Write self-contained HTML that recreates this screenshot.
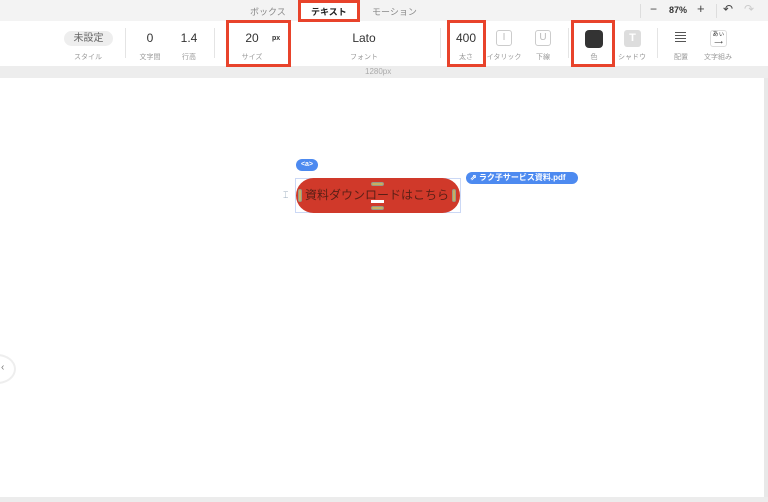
<!DOCTYPE html>
<html><head><meta charset="utf-8"><style>
*{margin:0;padding:0;box-sizing:border-box}
body{width:768px;height:502px;overflow:hidden;background:#fff;font-family:"Liberation Sans","Noto Sans CJK JP",sans-serif;position:relative}
.a{position:absolute}
.lbl{position:absolute;top:52px;font-size:7px;color:#999;transform:translateX(-50%);white-space:nowrap}
.val{position:absolute;top:31px;font-size:12px;color:#333;transform:translateX(-50%);white-space:nowrap}
.rb{position:absolute;border:3px solid #e8432b}
.sep{position:absolute;top:28px;width:1px;height:30px;background:#e4e4e4}
</style></head><body>
<div class="a" style="left:0;top:0;width:768px;height:21px;background:#f3f3f3"></div>
<div class="a" style="left:250px;top:5px;font-size:9px;color:#888">ボックス</div>
<div class="a" style="left:301px;top:3px;width:56px;height:16px;background:#fff"></div>
<div class="a" style="left:311px;top:5px;font-size:9px;color:#222;font-weight:bold">テキスト</div>
<div class="a" style="left:372px;top:5px;font-size:9px;color:#888">モーション</div>
<div class="a" style="left:640px;top:4px;width:1px;height:14px;background:#ddd"></div>
<div class="a" style="left:650px;top:2px;font-size:12px;color:#444">−</div>
<div class="a" style="left:669px;top:5px;font-size:9px;color:#333;font-weight:bold">87%</div>
<div class="a" style="left:697px;top:1px;font-size:13px;color:#444">+</div>
<div class="a" style="left:716px;top:4px;width:1px;height:14px;background:#ddd"></div>
<div class="a" style="left:723px;top:2px;font-size:12px;color:#444">↶</div>
<div class="a" style="left:744px;top:2px;font-size:12px;color:#ccc">↷</div>
<div class="a" style="left:0;top:21px;width:768px;height:45px;background:#fff"></div>
<div class="a" style="left:64px;top:31px;width:49px;height:15px;border-radius:8px;background:#eee;font-size:10px;color:#666;text-align:center;line-height:15px">未設定</div>
<div class="lbl" style="left:88px">スタイル</div>
<div class="sep" style="left:125px"></div>
<div class="val" style="left:150px">0</div><div class="lbl" style="left:150px">文字間</div>
<div class="val" style="left:189px">1.4</div><div class="lbl" style="left:189px">行高</div>
<div class="sep" style="left:214px"></div>
<div class="val" style="left:252px">20</div>
<div class="a" style="left:272px;top:35px;font-size:7px;color:#333;font-weight:bold">px</div>
<div class="lbl" style="left:252px">サイズ</div>
<div class="val" style="left:364px">Lato</div><div class="lbl" style="left:364px">フォント</div>
<div class="sep" style="left:440px"></div>
<div class="val" style="left:466px">400</div><div class="lbl" style="left:466px">太さ</div>
<div class="a" style="left:496px;top:30px;width:16px;height:16px;border:1px solid #ccc;border-radius:3px;font-size:10px;color:#bbb;text-align:center;line-height:14px">I</div>
<div class="lbl" style="left:504px">イタリック</div>
<div class="a" style="left:535px;top:30px;width:16px;height:16px;border:1px solid #ccc;border-radius:3px;font-size:10px;color:#bbb;text-align:center;line-height:14px">U</div>
<div class="lbl" style="left:543px">下線</div>
<div class="sep" style="left:568px"></div>
<div class="a" style="left:585px;top:30px;width:18px;height:18px;border-radius:4px;background:#333"></div>
<div class="lbl" style="left:594px">色</div>
<div class="a" style="left:624px;top:30px;width:17px;height:17px;border-radius:3px;background:#ddd;color:#fff;font-size:11px;font-weight:bold;text-align:center;line-height:17px">T</div>
<div class="lbl" style="left:632px">シャドウ</div>
<div class="sep" style="left:657px"></div>
<div class="a" style="left:675px;top:32px;width:11px;height:12px;background:repeating-linear-gradient(#555 0 1px,transparent 1px 3px)"></div>
<div class="lbl" style="left:681px">配置</div>
<div class="a" style="left:710px;top:30px;width:17px;height:17px;border:1px solid #ddd;border-radius:3px;font-size:6px;color:#333;text-align:center;line-height:8px">あぃ<br>⟶</div>
<div class="lbl" style="left:718px">文字組み</div>
<div class="a" style="left:0;top:66px;width:768px;height:12px;background:#ededed"></div>
<div class="a" style="left:365px;top:67px;font-size:8px;color:#aaa">1280px</div>
<div class="a" style="left:764px;top:78px;width:4px;height:424px;background:#e8e8e8"></div>
<div class="a" style="left:0;top:497px;width:768px;height:5px;background:#ececec"></div>
<div class="a" style="left:-22px;top:354px;width:38px;height:30px;border-radius:50%;border:2px solid #eee;background:#fff"></div>
<div class="a" style="left:1px;top:362px;font-size:10px;color:#777">‹</div>
<div class="rb" style="left:298px;top:0;width:62px;height:22px"></div>
<div class="rb" style="left:226px;top:20px;width:65px;height:47px"></div>
<div class="rb" style="left:447px;top:20px;width:39px;height:47px"></div>
<div class="rb" style="left:571px;top:20px;width:44px;height:47px"></div>
<div class="a" style="left:296px;top:159px;width:22px;height:12px;border-radius:6px;background:#4d8af0;color:#fff;font-size:7px;font-weight:bold;text-align:center;line-height:12px">&lt;a&gt;</div>
<div class="a" style="left:466px;top:172px;width:112px;height:12px;border-radius:6px;background:#4d8af0;color:#fff;font-size:8px;font-weight:bold;padding-left:4px;line-height:12px">⇗ ラク子サービス資料.pdf</div>
<div class="a" style="left:295px;top:178px;width:166px;height:35px;border:1px solid #cbd8f5"></div>
<div class="a" style="left:296px;top:178px;width:164px;height:35px;border-radius:18px;background:#d0392a"></div>
<div class="a" style="left:305px;top:187px;font-size:12px;line-height:16px;color:#5a1f16;white-space:nowrap">資料ダウンロードはこちら</div>
<div class="a" style="left:283px;top:190px;font-size:9px;color:#9ab">⌶</div>
<div class="a" style="left:371px;top:182px;width:13px;height:4px;border-radius:2px;background:#c8b060;border:1px solid #998"></div>
<div class="a" style="left:371px;top:206px;width:13px;height:4px;border-radius:2px;background:#c8b060;border:1px solid #998"></div>
<div class="a" style="left:371px;top:200px;width:13px;height:3px;background:#fff"></div>
<div class="a" style="left:298px;top:189px;width:4px;height:13px;border-radius:2px;background:#c8b060;border:1px solid #998"></div>
<div class="a" style="left:452px;top:189px;width:4px;height:13px;border-radius:2px;background:#c8b060;border:1px solid #998"></div>
</body></html>
